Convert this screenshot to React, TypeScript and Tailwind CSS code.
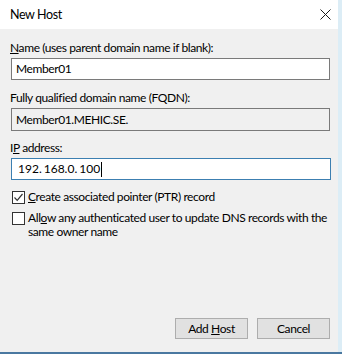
function Label({ children }: { children: React.ReactNode }) {
  return <div className="h-[16px] leading-[16px] mb-[2px] text-[#000]">{children}</div>;
}

function CheckBox({ checked }: { checked?: boolean }) {
  return (
    <span className="w-[13px] h-[13px] border border-[#333333] bg-white shrink-0 flex items-center justify-center">
      {checked && (
        <svg width="11" height="11" viewBox="0 0 11 11">
          <path d="M1.5 5.5 L4.2 8.3 L9.5 2" fill="none" stroke="#333" strokeWidth="1.2" />
        </svg>
      )}
    </span>
  );
}

export default function App() {
  return (
    <div
      className="w-[342px] h-[354px] flex flex-col text-[12px] tracking-[-0.4px] text-black select-none"
      style={{ fontFamily: 'Lato, "Segoe UI", sans-serif' }}
    >
      <div className="flex flex-1 min-h-0">
        <div className="w-[338px] flex flex-col">
          {/* Title bar */}
          <div className="h-[29px] bg-white flex items-center pl-[10px] shrink-0">
            <span className="leading-[16px] text-[12.5px]">New Host</span>
            <svg width="11" height="11" viewBox="0 0 11 11" className="ml-auto mr-[7px]">
              <path d="M0.5 0.5 L10.5 10.5 M10.5 0.5 L0.5 10.5" stroke="#1a1a1a" strokeWidth="1" />
            </svg>
          </div>

          {/* Body */}
          <div className="flex-1 bg-[#f0f0f0] flex flex-col pl-[10px] pr-[8px] pt-[11px] pb-[13px]">
            <Label>
              <u>N</u>ame (uses parent domain name if blank):
            </Label>
            <div className="ml-[1px] w-[319px] h-[22px] border border-[#7a7a7a] bg-white flex items-center pl-[4px]">
              Member01
            </div>

            <div className="mt-[10px]">
              <Label>Fully qualified domain name (FQDN):</Label>
            </div>
            <div className="ml-[1px] w-[319px] h-[23px] border border-[#7a7a7a] bg-[#f0f0f0] flex items-center pl-[4px]">
              Member01.MEHIC.SE.
            </div>

            <div className="mt-[9px]">
              <Label>
                I<u>P</u> address:
              </Label>
            </div>
            <div className="ml-[1px] w-[320px] h-[22px] border border-[#3c7fb1] bg-white flex items-center pl-[6px] tracking-normal">
              <span>192.</span>
              <span className="ml-[2px]">168.0.</span>
              <span className="ml-[2px]">100</span>
              <span className="w-[1px] h-[15px] bg-black ml-[1px]" />
            </div>

            <div className="mt-[9px] flex items-center gap-[3px] ml-[2px] h-[16px]">
              <CheckBox checked />
              <span className="leading-[16px]">
                <u>C</u>reate associated pointer (PTR) record
              </span>
            </div>

            <div className="mt-[5px] flex items-start gap-[3px] ml-[2px]">
              <span className="mt-[2px]">
                <CheckBox />
              </span>
              <span className="leading-[14px] mt-[1px] whitespace-nowrap">
                All<u>o</u>w any authenticated user to update DNS records with the
                <br />
                same owner name
              </span>
            </div>

            <div className="mt-auto flex justify-end gap-[9px]">
              <button className="w-[73px] h-[21px] border border-[#adadad] bg-[#e1e1e1] leading-[16px]">
                Add <u>H</u>ost
              </button>
              <button className="w-[73px] h-[21px] border border-[#adadad] bg-[#e1e1e1] leading-[16px]">
                Cancel
              </button>
            </div>
          </div>
        </div>
        <div className="w-[4px] bg-[#dcedf6]" />
      </div>
      <div className="h-[2px] bg-[#4a78a0] shrink-0" />
    </div>
  );
}
